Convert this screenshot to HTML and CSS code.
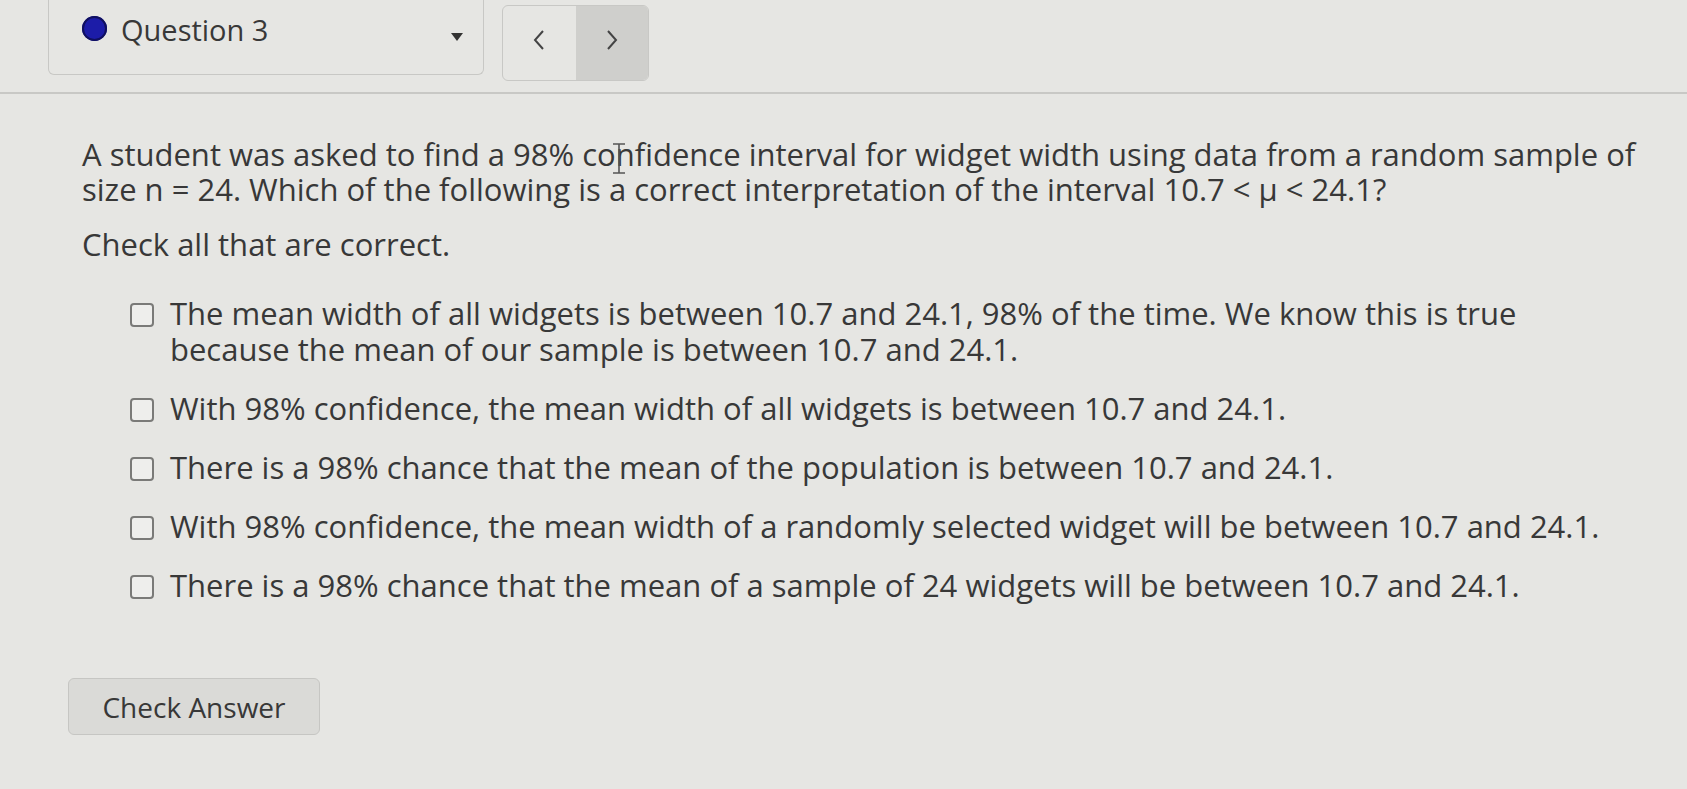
FILE: index.html
```html
<!DOCTYPE html>
<html lang="en">
  <head>
    <meta charset="UTF-8" />
    <meta name="viewport" content="width=device-width, initial-scale=1.0" />
    <title>Question 3</title>
    <link rel="stylesheet" href="styles.css">
  </head>
  <body>
    <div class="topbar">
      <div class="qselect">
        <span class="dot"></span>
        <span class="qname">Question 3</span>
        <span class="caret"></span>
      </div>
      <div class="nav">
        <button class="navbtn prev">
          <svg width="12" height="20" viewBox="0 0 12 20"><polyline points="10,1 2,10 10,19" /></svg>
        </button>
        <button class="navbtn next">
          <svg width="12" height="20" viewBox="0 0 12 20"><polyline points="2,1 10,10 2,19" /></svg>
        </button>
      </div>
    </div>

    <div class="question">
      <svg class="ibeam" width="14" height="31" viewBox="0 0 14 31"><path d="M1 1 H13 M7 1 V30 M1 30 H13" /></svg>
      <p class="prompt">
        A student was asked to find a 98% confidence interval for widget width using data from a random sample of
        size n = 24. Which of the following is a correct interpretation of the interval 10.7 &lt; &mu; &lt; 24.1?
      </p>
      <p class="prompt">Check all that are correct.</p>

      <ul class="options">
        <li class="option">
          <input type="checkbox" class="box" id="a1">
          <label for="a1">The mean width of all widgets is between 10.7 and 24.1, 98% of the time. We know this is true because the mean of our sample is between 10.7 and 24.1.</label>
        </li>
        <li class="option">
          <input type="checkbox" class="box" id="a2">
          <label for="a2">With 98% confidence, the mean width of all widgets is between 10.7 and 24.1.</label>
        </li>
        <li class="option">
          <input type="checkbox" class="box" id="a3">
          <label for="a3">There is a 98% chance that the mean of the population is between 10.7 and 24.1.</label>
        </li>
        <li class="option">
          <input type="checkbox" class="box" id="a4">
          <label for="a4">With 98% confidence, the mean width of a randomly selected widget will be between 10.7 and 24.1.</label>
        </li>
        <li class="option">
          <input type="checkbox" class="box" id="a5">
          <label for="a5">There is a 98% chance that the mean of a sample of 24 widgets will be between 10.7 and 24.1.</label>
        </li>
      </ul>

      <button class="check">Check Answer</button>
    </div>
  </body>
</html>
```

FILE: styles.css
```css
:root {
  --bg-color: #e6e6e3;
  --text-color: #383838;
  --line-color: #c8c8c5;
  --dark-half: #cfcfcc;
  --dot-color: #1c1ca8;
}

body {
  margin: 0;
  background-color: var(--bg-color);
  color: var(--text-color);
  font-family: "Open Sans", "Noto Sans", sans-serif;
  overflow: hidden;
}

.topbar {
  display: flex;
  align-items: flex-start;
  gap: 18px;
  height: 92px;
  padding-left: 48px;
  border-bottom: 2px solid var(--line-color);
}

.qselect {
  display: flex;
  align-items: center;
  width: 436px;
  height: 75px;
  box-sizing: border-box;
  padding: 0 20px 0 33px;
  border: 1px solid var(--line-color);
  border-top: none;
  border-radius: 0 0 6px 6px;
}

.dot {
  width: 25px;
  height: 25px;
  border-radius: 50%;
  background-color: var(--dot-color);
  box-shadow: inset 0 0 0 2px #10105e;
  margin-top: -18px;
}

.qname {
  flex: 1;
  margin-left: 14px;
  margin-top: -16px;
  font-size: 29px;
}

.caret {
  width: 0;
  height: 0;
  border-left: 6px solid transparent;
  border-right: 6px solid transparent;
  border-top: 8px solid #333;
}

.nav {
  display: flex;
  margin-top: 5px;
  width: 145px;
  height: 74px;
  border: 1px solid var(--line-color);
  border-radius: 6px;
  overflow: hidden;
}

.navbtn {
  flex: 1;
  border: none;
  padding: 0;
  display: flex;
  align-items: center;
  justify-content: center;
  background-color: transparent;
  cursor: pointer;
}

.navbtn.next {
  background-color: var(--dark-half);
}

.navbtn svg {
  margin-top: -6px;
}

.navbtn polyline {
  fill: none;
  stroke: #444;
  stroke-width: 2;
}

.question {
  position: relative;
  padding: 43px 0 0 82px;
}

/* mouse cursor sitting over "confidence" */
.ibeam {
  position: absolute;
  left: 612px;
  top: 49px;
}

.ibeam path {
  fill: none;
  stroke: #555;
  stroke-width: 1.6;
}

.prompt {
  margin: 0 0 20px;
  width: 1570px;
  font-size: 31px;
  line-height: 35px;
}

.options {
  list-style: none;
  margin: 33px 0 0;
  padding: 0 0 0 48px;
  display: flex;
  flex-direction: column;
  gap: 23px;
}

.option {
  display: flex;
  align-items: flex-start;
  gap: 16px;
  font-size: 31px;
  line-height: 36px;
}

.option label {
  width: 1445px;
}

.box {
  appearance: none;
  flex: none;
  margin: 8px 0 0;
  width: 24px;
  height: 24px;
  border: 2px solid #7a7a78;
  border-radius: 4px;
  background-color: #eeeeec;
}

.check {
  margin: 75px 0 0 -14px;
  width: 252px;
  height: 57px;
  font-family: "Open Sans", "Noto Sans", sans-serif;
  font-size: 28px;
  color: var(--text-color);
  background-color: #dadad7;
  border: 1px solid #c6c6c3;
  border-radius: 6px;
  cursor: pointer;
}
```
